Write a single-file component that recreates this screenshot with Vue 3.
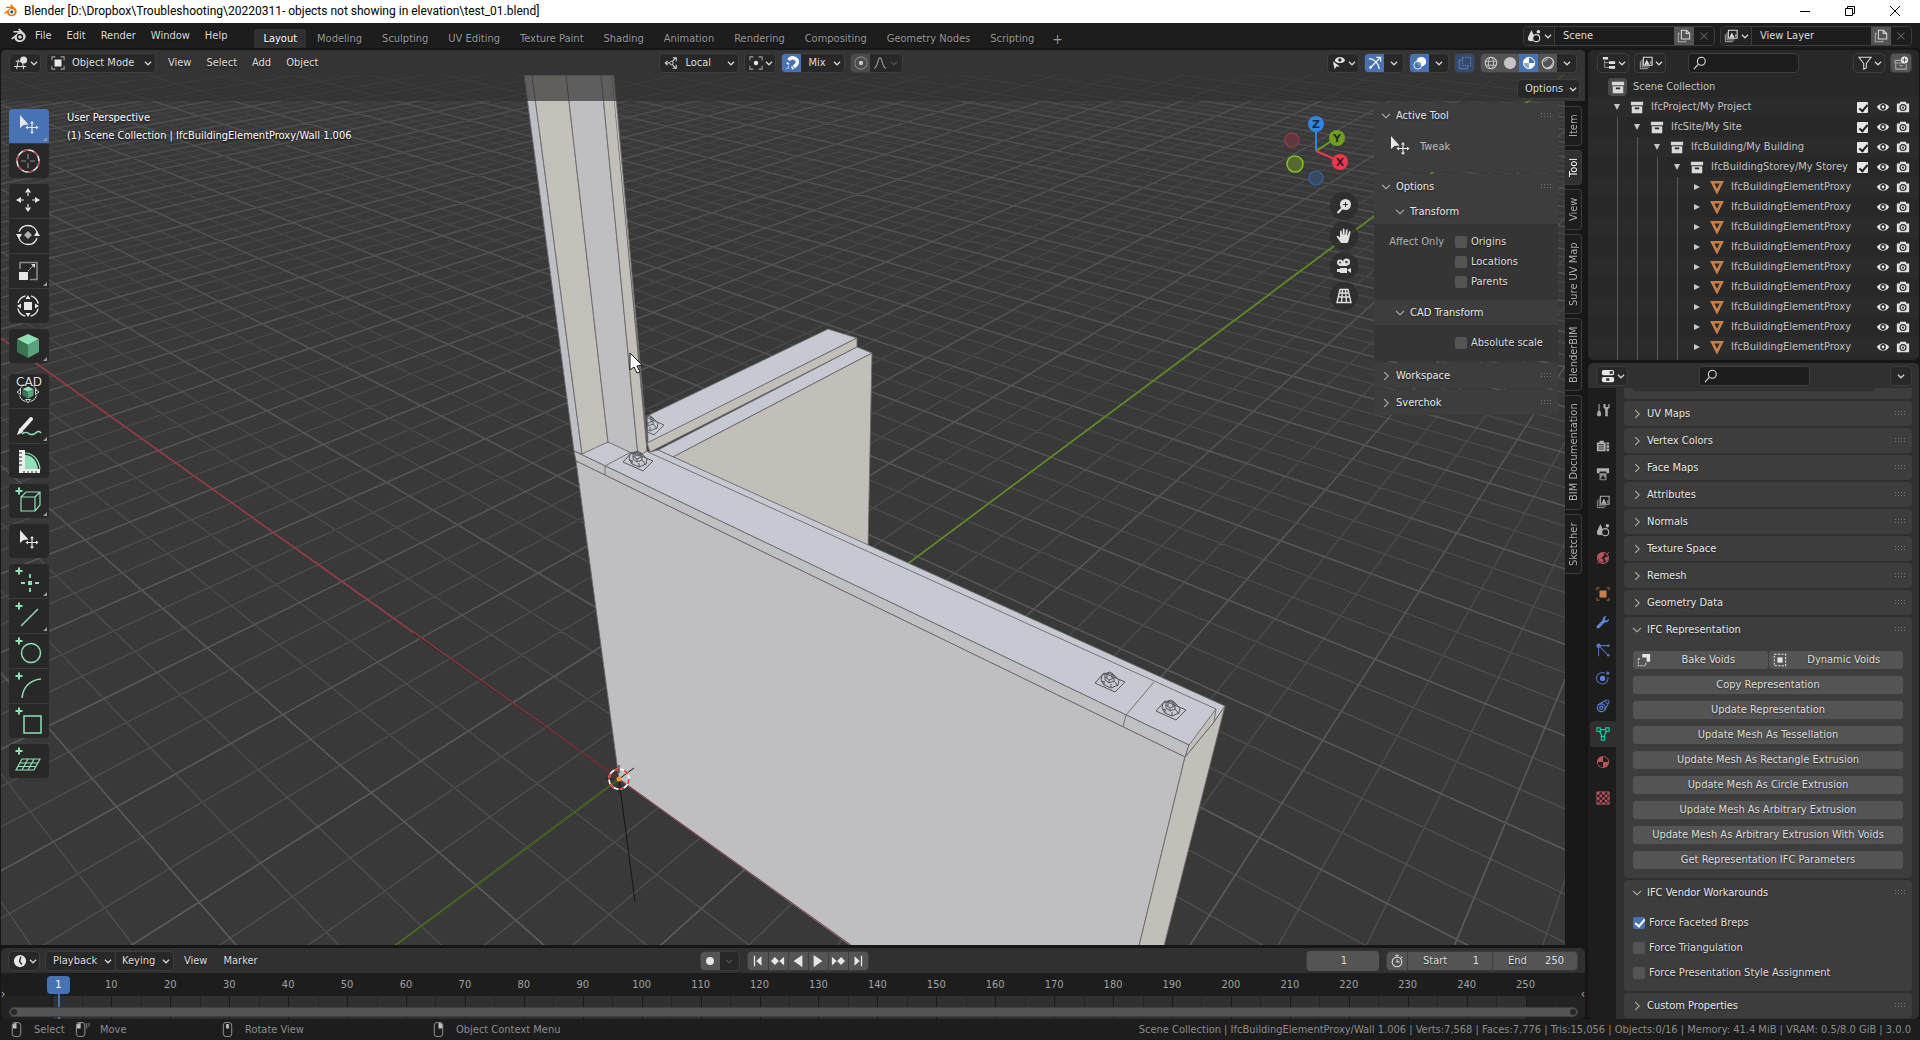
<script setup>
const O = [618, 729]
const VX = [-753, -249]
const VY = [1930, -249]
const A = -0.0281
const B = 0.0327

const project = (x, y) => {
  const w = 1 + A * x + B * y
  return [
    (O[0] + A * x * VX[0] + B * y * VY[0]) / w,
    (O[1] + A * x * VX[1] + B * y * VY[1]) / w,
  ]
}
const segment = (p, q) => 'M' + p.map((n) => n.toFixed(1)).join(' ') + 'L' + q.map((n) => n.toFixed(1)).join(' ')
const NEAR = 0.3
const lineX = (x) => {
  const y0 = Math.max(-30, (NEAR - 1 - A * x) / B)
  return segment(project(x, y0), project(x, 130))
}
const lineY = (y) => {
  const x1 = Math.min(34, (NEAR - 1 - B * y) / A)
  return segment(project(-130, y), project(x1, y))
}
const minor = []
const major = []
for (let i = -100; i <= 30; i++) if (i) (i % 3 ? minor : major).push(lineX(i))
for (let i = -21; i <= 110; i++) if (i) (i % 3 ? minor : major).push(lineY(i))
const minorPath = minor.join('')
const majorPath = major.join('')
const axisX = lineY(0)
const axisY = lineX(0)

const bolts = [[637, 411], [1109, 632], [1170, 660]]
const boltPath = 'M-15 1L-6-9 15 0 5 10zM-9-2l3 5 7 3 7-3 1-5-5-5-7-2-5 2zM-5-8v6l4 3 5-2v-6l-4-3zM-5-5l4 3 5-2M-1-2v3M-9-1l4 1M8 4L4-1M-6 3V0M1 6V2M-3-9v5M2-9v5'

const tweak = '<path d="M11 6v13l3.5-3 5-.5z" fill="#e6e6e6"/><path d="M23 13.5v10M18 18.5h10" stroke="#e6e6e6" stroke-width="1.2" fill="none"/><path d="M23 12l2 2.5h-4zM23 25l2-2.5h-4zM16.5 18.5l2.5-2v4zM29.5 18.5l-2.5-2v4z" fill="#e6e6e6"/>'
const plus = '<path d="M10 3.5v7M6.5 7h7" stroke="#8fe0b4" stroke-width="2" fill="none"/>'
const corner = '<path d="M38 28v4h-4z" fill="#9a9a9a"/>'
const cube = (x, y, s) => `<g transform="translate(${x} ${y}) scale(${s})"><path d="M0-11L11-6 0 0-11-6z" fill="#8fe0b4"/><path d="M-11-6L0 0v13L-11 7z" fill="#3b7355"/><path d="M11-6L0 0v13L11 7z" fill="#58a37c"/></g>`

const tools = [
  [
    ['Tweak', tweak + corner],
    ['Cursor', '<circle cx="19" cy="17" r="11" fill="none" stroke="#e6e6e6" stroke-width="1.5"/><circle cx="19" cy="17" r="11" fill="none" stroke="#b04048" stroke-width="1.5" stroke-dasharray="5.76"/><path d="M12 17h5M21 17h5M19 10v5M19 19v5" stroke="#8a8a8a" stroke-width="1.2"/>'],
  ],
  [
    ['Move', '<path d="M19 4l3 4.5h-6zM19 28l3-4.5h-6zM7 16l5-3v6zM31 16l-5-3v6z" fill="#e6e6e6"/><path d="M19 9v3M19 20v3M12 16h3M23 16h3" stroke="#e6e6e6" stroke-width="1.2"/>'],
    ['Rotate', '<circle cx="19" cy="16" r="9.5" fill="none" stroke="#e6e6e6" stroke-width="1.3" stroke-dasharray="24 5.8" stroke-dashoffset="-3"/><path d="M19 12l4 4-4 4-4-4z" fill="#b0b0b0"/><path d="M7 15h6l-3 5zM25 17h6l-3-5z" fill="#e6e6e6"/>'],
    ['Scale', '<path d="M11 15V8.5h17v17h-7" fill="none" stroke="#8d8d8d" stroke-width="1.5"/><path d="M10 18h9v8h-9z" fill="#e6e6e6"/><path d="M19 17l5-5" stroke="#e6e6e6" stroke-dasharray="2 1"/><path d="M26 10v4l-4-4z" fill="#e6e6e6"/>' + corner],
    ['Transform', '<circle cx="19" cy="17" r="10.5" fill="none" stroke="#e6e6e6" stroke-width="1.3" stroke-dasharray="11 5.49" stroke-dashoffset="-2.7"/><path d="M15 13h8v8h-8zM19 6l2.5 4h-5zM19 28l2.5-4h-5zM8 17l4-2.5v5zM30 17l-4-2.5v5z" fill="#e6e6e6"/>'],
  ],
  [['Add Cube', cube(19, 16, 1) + corner]],
  [
    ['CAD', '<circle cx="19" cy="19" r="9" fill="none" stroke="#d0d0d0" stroke-dasharray="9 5.14" stroke-dashoffset="-2.5"/>' + cube(19, 18, 0.5) + '<path d="M19 29l-2.5-3.5h5zM8 18l3.5-2.5v5zM30 18l-3.5-2.5v5z" fill="none" stroke="#d0d0d0"/>'],
    ['Annotate', '<path d="M13 20L22 10" stroke="#ededed" stroke-width="4" stroke-linecap="round"/><path d="M8 26l2.5-7 4 4z" fill="#ededed"/><path d="M13 25c6-5 7 3 12 0 3-2 5-4 7-1" fill="none" stroke="#8fe0b4" stroke-width="1.5"/>' + corner],
    ['Measure', '<path d="M16 25V11c7 0 12 6 13 14z" fill="#8fe0b4"/><path d="M16 9c9 0 14 8 15 16" fill="none" stroke="#8fe0b4" stroke-width="1.2"/><path d="M10 6h6v19h15v4H10z" fill="#ededed"/><path d="M10 9h3M10 13h3M10 17h3M10 21h3M15 29v-2M19 29v-2M23 29v-2M27 29v-2" stroke="#333"/>'],
  ],
  [['Add Box', plus + '<path d="M12 13h14v14H12zM12 13l5-5h14v13l-5 6M26 13l5-5" fill="none" stroke="#8fe0b4" stroke-width="1.2"/>' + corner]],
  [['Select', tweak]],
  [
    ['Point', plus + '<path d="M19 17h4v4h-4z" fill="#8fe0b4"/><path d="M12 19h4M26 19h4M21 10v4M21 24v4" stroke="#8fe0b4" stroke-width="1.8"/>' + corner],
    ['Line', plus + '<path d="M12 27L29 10" stroke="#8fe0b4" stroke-width="1.5"/>' + corner],
    ['Circle', plus + '<circle cx="22" cy="19" r="9.5" fill="none" stroke="#8fe0b4" stroke-width="1.5"/>'],
    ['Arc', plus + '<path d="M13 29C14 18 21 11 32 10" fill="none" stroke="#8fe0b4" stroke-width="1.5"/>'],
    ['Rectangle', plus + '<path d="M15 12h17v17H15z" fill="none" stroke="#8fe0b4" stroke-width="1.5"/>'],
  ],
  [['Workplane', plus + '<path d="M13 15h18l-6 11H7zM11 19h18M9 22.5h18M19 15l-6 11M25 15l-6 11" fill="none" stroke="#8fe0b4" stroke-width="1.2"/>']],
]

const w = 'fill="none" stroke="#d9d9d9" stroke-width="1.2"'
const layerIcon = '<path d="M5 1.5h10v9H5z" fill="none" stroke="currentColor" stroke-width="1.2"/><path d="M6 10l3-6 3 6z" fill="currentColor"/><path d="M13 9V6h1v3z" fill="currentColor"/><path d="M3.5 4v8.5H12M1.5 6v8.5H10" fill="none" stroke="currentColor" stroke-width="1" opacity=".8"/>'
const sceneIcon = '<path d="M5 1l4 9c0 3-2 4-4.5 4S1 13 1 10z" fill="currentColor"/><circle cx="10.5" cy="10.5" r="4" fill="#1d1d1d" stroke="currentColor" stroke-width="1.3"/><circle cx="13" cy="3" r="2" fill="currentColor"/>'
const ic = {
  down: '<path d="M4.5 6.5L8 10l3.5-3.5" fill="none" stroke="currentColor" stroke-width="1.5"/>',
  open: '<path d="M3.5 5.5L8 10l4.5-4.5" fill="none" stroke="#b8b8b8" stroke-width="1.2"/>',
  closed: '<path d="M6 3.5L10.5 8 6 12.5" fill="none" stroke="#b8b8b8" stroke-width="1.2"/>',
  view3d: `<path d="M2 6h7M0 12h14M5 4L3 15M10 8l1 7" ${w}/><circle cx="11" cy="4.5" r="4" fill="#e0e0e0"/>`,
  object: `<path d="M1 5V1h4M11 1h4v4M15 11v4h-4M5 15H1v-4" fill="none" stroke="#a0a0a0" stroke-width="1.2"/><path d="M4 4h8v8H4z" fill="#e6e6e6"/>`,
  local: `<path d="M2 8h6L13 2.5M8 8l5 5.5M10 2h4v4M14 10v4h-4M4 5.5L1.5 8 4 10.5" ${w}/><circle cx="8.5" cy="8" r="2" fill="#282828" stroke="#d9d9d9"/>`,
  pivot: '<path d="M1 5V1h4M11 1h4v4M15 11v4h-4M5 15H1v-4" fill="none" stroke="#a0a0a0" stroke-width="1.2"/><circle cx="8" cy="8" r="2.5" fill="#e6e6e6"/>',
  magnet: '<path d="M4 4.5C8-.5 15 3 14 8c-.5 2-2 3-4 4.5" fill="none" stroke="#fff" stroke-width="3.8"/><path d="M2 7.5l2.5 2M7.5 12l2 3" stroke="#fff" stroke-width="2"/><path d="M1 14h3v-3" fill="none" stroke="#c5d2ea"/>',
  prop: '<circle cx="8" cy="8" r="7" fill="none" stroke="#858585" stroke-width="1.2"/><circle cx="8" cy="8" r="2.5" fill="#c9c9c9"/>',
  curve: '<path d="M1 14C6 13 5 2 8 2s2 11 7 12" fill="none" stroke="#9a9a9a" stroke-width="1.3"/>',
  vis: '<path d="M3 5c3-5 9-5 12 0-3 4-9 4-12 0z" fill="#e6e6e6"/><circle cx="9" cy="4.5" r="2" fill="#282828"/><path d="M1 6l2 9 2-3 4 0z" fill="#e6e6e6"/>',
  gizmo: '<path d="M1 3c6 0 11 5 12 12M2 14L14 2M9.5 1.5h5v5" fill="none" stroke="#fff" stroke-width="1.3"/><circle cx="3" cy="13" r="1.5" fill="#fff"/>',
  overlay: '<circle cx="9.5" cy="6.5" r="5.5" fill="#fff"/><circle cx="5.5" cy="10.5" r="4.5" fill="#4772b3" fill-opacity=".75" stroke="#fff"/>',
  xray: '<path d="M5 1.5h9.5V11H5z" fill="none" stroke="#6687bd" stroke-dasharray="2 1"/><path d="M5 4.5H1.5v10H11V11" fill="none" stroke="#6687bd"/>',
  wire: '<circle cx="8" cy="8" r="6.5" fill="none" stroke="#d0d0d0" stroke-width="1.2"/><ellipse cx="8" cy="8" rx="3" ry="6.5" fill="none" stroke="#d0d0d0"/><path d="M2 6h12M2 10.5h12" stroke="#d0d0d0"/>',
  solid: '<circle cx="8" cy="8" r="7" fill="#c4c4c4"/>',
  material: '<circle cx="8" cy="8" r="6.5" fill="#fff" stroke="#fff"/><path d="M8 2v6h6a6 6 0 0 0-6-6z" fill="#4772b3"/><path d="M8 8v6a6 6 0 0 1-6-6z" fill="#4772b3" opacity=".6"/>',
  rendered: '<circle cx="8" cy="8" r="6.5" fill="none" stroke="#c9c9c9" stroke-width="1.4"/><path d="M4 7a4 4 0 0 1 4-3.5" fill="none" stroke="#c9c9c9"/><path d="M13 6c0 4-3 7-7 7 4 3 9-2 7-7z" fill="#c9c9c9"/>',
  outliner: '<path d="M1 1h6v3H1zM8 6h7v3H8zM8 11.5h7v3H8z" fill="#e0e0e0"/><path d="M3 5v8h5M3 7.5h5" fill="none" stroke="#a8a8a8"/>',
  layer: layerIcon,
  scene: sceneIcon,
  search: `<circle cx="9.5" cy="6" r="4.5" fill="none" stroke="#e0e0e0" stroke-width="1.2"/><path d="M6 9.5L1 15" stroke="#e0e0e0" stroke-width="1.2"/>`,
  filter: `<path d="M1 1.5h14L9.5 8.5v5L6.5 15V8.5z" ${w}/>`,
  newcol: '<path d="M1 5h9M2 7v8h12V9M1 5v3h10M6 11h4" fill="none" stroke="#a9a9a9" stroke-width="1.2"/><circle cx="12" cy="4.5" r="4" fill="#eee"/><path d="M12 2v5M9.5 4.5h5" stroke="#444"/>',
  copy: `<path d="M5 1.5h6L14.5 5v6.5H5z" ${w}/><path d="M10.5 1.5V5h4" ${w}/><path d="M3 5H1.5v9.5H10V13" fill="none" stroke="#aaa" stroke-width="1.2"/>`,
  x: '<path d="M4 4l8 8M12 4l-8 8" stroke="#686868" stroke-width="1.2"/>',
  collection: '<path d="M1 2h14v4H1z" fill="#d9d9d9"/><path d="M2 7h12v8H2z" fill="#d9d9d9"/><path d="M5.5 8.5h5v2h-5z" fill="#282828"/>',
  mesh: '<path d="M2.5 2.5h11L8 13.5z" fill="none" stroke="#c87f48" stroke-width="3"/>',
  eye: '<path d="M1 8c3-5.5 11-5.5 14 0-3 5.5-11 5.5-14 0z" fill="#e6e6e6"/><circle cx="8" cy="8" r="3.3" fill="#282828"/><circle cx="8" cy="8" r="1.6" fill="#e6e6e6"/>',
  cam: '<path d="M1 4h3.5V2h7v2H15v10H1z" fill="#e0e0e0"/><circle cx="8" cy="8.7" r="4" fill="#282828"/><circle cx="8" cy="8.7" r="2.7" fill="#e0e0e0"/><circle cx="8" cy="8.7" r="1.3" fill="#282828"/>',
  props: '<rect x="1" y="1" width="14" height="6" rx="2" fill="#e6e6e6"/><rect x="1" y="9" width="14" height="6" rx="2" fill="#e6e6e6"/><path d="M10 2.5h3.5v3H10zM6 10.5h3.5v3H6z" fill="#282828"/>',
  clock: '<circle cx="8" cy="8" r="7" fill="#e6e6e6"/><path d="M9 3L7.5 8.5 10 12" fill="none" stroke="#282828" stroke-width="1.6"/>',
  watch: `<circle cx="8" cy="9" r="5.5" ${w}/><path d="M6 1.5h4M8 2v2M12.5 3l1.5 1.5M8 6v3h3" ${w}/>`,
  rec: '<circle cx="8" cy="8" r="4.5" fill="#e6e6e6"/>',
  jumpStart: '<path d="M4 2v12" stroke="#e6e6e6" stroke-width="1.5"/><path d="M12 2.5v11L6 8z" fill="#e6e6e6"/>',
  prevKey: '<path d="M4.5 3.500L9 8l-4.500 4.500L0 8zM15 3v10L9.500 8z" fill="#e6e6e6"/>',
  playBack: '<path d="M13 1v14L3 8z" fill="#e6e6e6"/>',
  play: '<path d="M3 1v14l10-7z" fill="#e6e6e6"/>',
  nextKey: '<path d="M11.500 3.500L16 8l-4.500 4.500L7 8zM1 3v10l5.500-5z" fill="#e6e6e6"/>',
  jumpEnd: '<path d="M12 2v12" stroke="#e6e6e6" stroke-width="1.5"/><path d="M4 2.5v11L10 8z" fill="#e6e6e6"/>',
  bake: '<path d="M6 1h9v9h-4V5H6z" fill="#e6e6e6"/><path d="M1.5 6.5V14.5H10V11M1.5 6.5H5" fill="none" stroke="#e6e6e6" stroke-width="1.2" stroke-dasharray="2 1.5"/>',
  dynamic: '<path d="M1.5 1.5h13v13h-13z" fill="none" stroke="#e6e6e6" stroke-width="1.2" stroke-dasharray="2.5 1.5"/><path d="M5 5h6v6H5z" fill="#e6e6e6"/>',
  tool: '<path d="M3.5 1v8" stroke="#a8a8a8" stroke-width="1.2"/><path d="M2 9h3l1 4c0 1.5-1 2-2.5 2S1 14.5 1 13z" fill="#a8a8a8"/><path d="M8.5 1v4l2 2v8h3V7l2-2V1h-1.5v3.5h-3V1z" fill="#a8a8a8"/>',
  render: '<path d="M1 4h3V2h5v2h2v10H1z" fill="#b0b0b0"/><path d="M3 6.5h6M3 9h6M3 11.5h6" stroke="#1d1d1d"/><path d="M12 4h3v10h-3z" fill="#b0b0b0"/><path d="M12 6.5h3M12 10.5h3" stroke="#1d1d1d"/>',
  output: '<path d="M1 1.5h14V7h-3V5H4v2H1z" fill="#b0b0b0"/><path d="M4 7h8v8H4z" fill="#909090"/><path d="M5 14l3-5 3 5z" fill="#1d1d1d"/>',
  world: '<circle cx="8" cy="8" r="6.3" fill="none" stroke="#b8525c" stroke-width="1.3"/><path d="M2 5l4-3 3 1-1 3-3 2 3 2v3L4 11zM10 8l4-1-2 5zM1 15l2-2M13 3l2-2" fill="#b8525c" stroke="#b8525c"/>',
  obj: '<path d="M1 4V1h3M12 1h3v3M15 12v3h-3M4 15H1v-3" fill="none" stroke="#8a5a36" stroke-width="1.2"/><path d="M4 4h8v8H4z" fill="#c87f48"/>',
  mod: '<path d="M2.5 13.5L9 7" stroke="#5b83d6" stroke-width="3.6" stroke-linecap="round"/><path d="M12 1C8 1 6.5 5 8.5 7.5 11 10 15 8 15 4l-3 2.5L9.8 5z" fill="#5b83d6"/>',
  part: '<circle cx="3" cy="3" r="2.5" fill="#5b83d6"/><path d="M3 3h11M3 3l11 11M3 3v12" stroke="#5672ad" stroke-width="1.2"/><circle cx="14" cy="3" r="1.5" fill="#5672ad"/><circle cx="14" cy="14" r="1.5" fill="#5672ad"/>',
  phys: '<circle cx="7.5" cy="8.5" r="3" fill="#5b83d6"/><path d="M10 2.5A6.5 6.5 0 1 0 13.5 7" fill="none" stroke="#5672ad" stroke-width="1.2"/><circle cx="13.5" cy="2.5" r="1.8" fill="#5672ad"/>',
  constr: '<circle cx="6" cy="10" r="4.5" fill="none" stroke="#5b83d6" stroke-width="1.3"/><circle cx="6" cy="10" r="1.8" fill="none" stroke="#5b83d6" stroke-width="1.3"/><path d="M2 7L11 1.5M10 13l4.5-9" stroke="#5b83d6" stroke-width="1.2"/><circle cx="13" cy="3" r="2" fill="none" stroke="#5b83d6"/>',
  data: '<path d="M3 3h10L8 13z" fill="none" stroke="#00d6a3" stroke-width="1.3"/><path d="M1 1h4v4H1zM11 1h4v4h-4zM6 11h4v4H6z" fill="#303030" stroke="#00d6a3" stroke-width="1.2"/>',
  mat: '<circle cx="8" cy="8" r="7" fill="#b8525c"/><path d="M8 8v6a6 6 0 0 1-6-6zM8 2a6 6 0 0 1 6 6H8z" fill="#1d1d1d"/>',
  tex: '<path d="M1 1h14v14H1z" fill="#1d1d1d" stroke="#b8525c"/><path d="M1 1h3v3H1zM7 1h3v3H7zM4 4h3v3H4zM10 4h3v3h-3zM1 7h3v3H1zM7 7h3v3H7zM4 10h3v3H4zM10 10h3v3h-3zM13 1h2v3h-2zM13 7h2v3h-2zM1 13h3v2H1zM7 13h3v2H7zM13 13h2v2h-2z" fill="#b8525c"/>',
  blender: '<path d="M1 10.5L8.5 4.5H3.5V3h6L8 1.5 9.5.5 15 6c2 4-1 8-5 8-3.5 0-5.5-2-5.5-4.5L2.5 11.5z" fill="currentColor"/><circle cx="10" cy="9" r="3.2" fill="var(--hole)"/><circle cx="10" cy="9" r="1.8" fill="var(--dot)"/>',
  mouseL: '<path d="M3.5 3.5a3 3 0 0 1 3-3h3a3 3 0 0 1 3 3v9a3 3 0 0 1-3 3h-3a3 3 0 0 1-3-3z" fill="none" stroke="#9a9a9a"/><path d="M4 7V3l3-2h1v6z" fill="#c0c0c0"/>',
  mouseD: '<path d="M1.5 3.5a3 3 0 0 1 3-3h3a3 3 0 0 1 3 3v9a3 3 0 0 1-3 3h-3a3 3 0 0 1-3-3z" fill="none" stroke="#9a9a9a"/><path d="M2 7V3l3-2h1v6z" fill="#c0c0c0"/><path d="M12.5 1v6M15 1v4" stroke="#888"/>',
  mouseM: '<rect x="3.5" y=".5" width="9" height="15" rx="3" fill="none" stroke="#9a9a9a"/><rect x="6.5" y="2" width="3" height="5" rx="1" fill="#c0c0c0"/>',
  mouseR: '<rect x="3.5" y=".5" width="9" height="15" rx="3" fill="none" stroke="#9a9a9a"/><path d="M8 1h2l2 2v4H8z" fill="#c0c0c0"/>',
  zoom: '<circle cx="9.5" cy="6.5" r="5.5" fill="#e0e0e0"/><path d="M6 10.5L1.5 15" stroke="#e0e0e0" stroke-width="2.2"/><path d="M9.5 4v5M7 6.5h5" stroke="#333"/>',
  hand: '<path d="M5 15c-1-2-3-4-4.5-6.5 1-1 2.5 0 3.5 1V3.5c0-1.2 1.6-1.2 1.7 0L6 7h.5l.3-5.5c.1-1.2 1.6-1.2 1.7 0L8.7 7h.5l.8-5c.3-1.1 1.7-.9 1.6.3L11.2 7.5h.5l1.3-4c.4-1 1.7-.6 1.5.5L13 11c-.5 2-1 3-1.5 4z" fill="#e0e0e0"/>',
  movie: '<circle cx="4" cy="4.5" r="3" fill="#e0e0e0"/><circle cx="10.5" cy="4" r="3.5" fill="#e0e0e0"/><path d="M3 5h8v3H3zM4 10h7v5H4zM11 12l4-2v5zM1 11h3v3H1z" fill="#e0e0e0"/><circle cx="4" cy="4.5" r="1" fill="#333"/><circle cx="10.5" cy="4" r="1.2" fill="#333"/>',
  persp: '<path d="M4 1.5h8l3 13H1zM3.5 5h9.500M2.5 9h11.500M6.5 1.5l-1 13M9.5 1.5l1 13" fill="none" stroke="#e0e0e0" stroke-width="1.4"/>',
}

const workspaces = ['Layout', 'Modeling', 'Sculpting', 'UV Editing', 'Texture Paint', 'Shading', 'Animation', 'Rendering', 'Compositing', 'Geometry Nodes', 'Scripting']
const sideTabs = [['Item', 40], ['Tool', 35], ['View', 41], ['Sure UV Map', 80], ['BlenderBIM', 73], ['BIM Documentation', 115], ['Sketcher', 60]]
const tree = [
  ['IfcProject/My Project', 0], ['IfcSite/My Site', 1], ['IfcBuilding/My Building', 2], ['IfcBuildingStorey/My Storey', 3],
  ...Array.from({ length: 10 }, () => ['IfcBuildingElementProxy', 4]),
]
const propTabs = [
  ['tool'], ['render', 1], ['output'], ['layer'], ['scene'], ['world'], ['obj', 1], ['mod'], ['part'], ['phys'], ['constr'], ['data'], ['mat'], ['tex', 1],
]
const panels = ['UV Maps', 'Vertex Colors', 'Face Maps', 'Attributes', 'Normals', 'Texture Space', 'Remesh', 'Geometry Data']
const actions = ['Copy Representation', 'Update Representation', 'Update Mesh As Tessellation', 'Update Mesh As Rectangle Extrusion', 'Update Mesh As Circle Extrusion', 'Update Mesh As Arbitrary Extrusion', 'Update Mesh As Arbitrary Extrusion With Voids', 'Get Representation IFC Parameters']
const frames = Array.from({ length: 26 }, (_, i) => i * 10)
</script>

<template>
  <div class="app">
    <header class="title">
      <svg class="ic brand" viewBox="0 0 16 16" v-html="ic.blender" />
      <span>Blender [D:\Dropbox\Troubleshooting\20220311- objects not showing in elevation\test_01.blend]</span>
      <div class="win">
        <button aria-label="Minimize"><svg viewBox="0 0 10 10"><path d="M0 5.5h10" /></svg></button>
        <button aria-label="Restore"><svg viewBox="0 0 10 10"><path d="M.5 2.5h7v7h-7zM2.5 2.5v-2h7v7h-2" /></svg></button>
        <button aria-label="Close"><svg viewBox="0 0 10 10"><path d="M0 0l10 10M10 0L0 10" /></svg></button>
      </div>
    </header>

    <nav class="menubar">
      <svg class="ic logo" viewBox="0 0 16 16" v-html="ic.blender" />
      <button v-for="m in ['File', 'Edit', 'Render', 'Window', 'Help']" :key="m" class="menu">{{ m }}</button>
      <div class="workspaces">
        <button v-for="(t, i) in workspaces" :key="t" :class="{ on: i === 0 }">{{ t }}</button>
        <button class="add">+</button>
      </div>
      <div class="data-block" v-for="d in [['scene', 'Scene'], ['layer', 'View Layer']]" :key="d[1]">
        <button class="pick" :aria-label="d[1] + ' list'"><svg class="ic" viewBox="0 0 16 16" v-html="ic[d[0]]" /><svg class="ic ch" viewBox="0 0 16 16" v-html="ic.down" /></button>
        <input :value="d[1]" :aria-label="d[1] + ' name'" />
        <button class="dup" aria-label="Duplicate"><svg class="ic" viewBox="0 0 16 16" v-html="ic.copy" /></button>
        <button class="del" aria-label="Remove"><svg class="ic" viewBox="0 0 16 16" v-html="ic.x" /></button>
      </div>
    </nav>

    <main class="work">
      <div class="left">
        <section class="viewport">
          <svg class="scene" viewBox="0 0 1584 895" preserveAspectRatio="xMidYMid slice">
            <defs>
              <linearGradient id="gMinor" gradientUnits="userSpaceOnUse" x1="0" y1="0" x2="0" y2="895">
                <stop offset="0" stop-color="#4a4a4a" stop-opacity="0.45" />
                <stop offset="0.4" stop-color="#4b4b4b" stop-opacity="0.9" />
                <stop offset="1" stop-color="#4f4f4f" />
              </linearGradient>
              <linearGradient id="gMajor" gradientUnits="userSpaceOnUse" x1="0" y1="0" x2="0" y2="895">
                <stop offset="0" stop-color="#525252" stop-opacity="0.7" />
                <stop offset="0.3" stop-color="#525252" />
                <stop offset="1" stop-color="#5c5c5c" />
              </linearGradient>
            </defs>
            <rect width="1584" height="895" fill="#393939" />
            <path :d="minorPath" stroke="url(#gMinor)" stroke-width="1.3" fill="none" />
            <path :d="majorPath" stroke="url(#gMajor)" stroke-width="1.6" fill="none" />
            <path :d="axisX" stroke="#9c3a45" stroke-width="1.6" />
            <path :d="axisY" stroke="#5f8a24" stroke-width="1.8" />
            <path d="M396 895L618 729 412 583" fill="none" stroke="#111" stroke-width="1" opacity=".6" />

            <g stroke="#6a6a6e" stroke-width=".9" stroke-linejoin="round">
              <path d="M646 366L827 279 856 288 647 393z" fill="#c6c9d1" />
              <path :d="boltPath" transform="translate(648 375)" fill="none" stroke="#55555a" />
              <path d="M856 288V297L649 402 646 393z" fill="#c2bfb8" />
              <path d="M856 297L871 303 672 407 657 400z" fill="#c6c9d1" />
              <path d="M672 407L871 303 867 500z" fill="#c2bfb8" />
              <path d="M573 401L607 392 649 402 657 400 1224 656 1213 672 1188 695z" fill="#c6c9d1" />
              <path d="M573 401L1188 695 1184 707 575 411z" fill="#c0c0c3" />
              <path d="M575 411L1184 707 1138 896H850L618 729z" fill="#bfbfc2" />
              <path d="M1184 707L1213 672 1224 656 1163 896H1138z" fill="#c2bfb8" />
              <path d="M1188 695L1215 659 1213 672 1184 707z" fill="#c2bfb8" />
              <path d="M647 402L1215 659M604 416L630 402M604 416V425M1125 665L1153 632M1125 665L1122 677" fill="none" />
              <path d="M523 25H531L581 404 573 401z" fill="#bebfc4" />
              <path d="M531 25H565L607 392 581 404z" fill="#c3c0b9" />
              <path d="M565 25H600L637 406 607 392z" fill="#bfbfc2" />
              <path d="M600 25H611L645 390 646 401 637 406z" fill="#c2bfb8" />
              <path d="M611 25H613L646 390" fill="#c2bfb8" />
            </g>
            <path d="M850 895L618 729" stroke="#83434a" fill="none" />
            <path v-for="b in bolts" :key="b[0]" :d="boltPath" :transform="`translate(${b[0]} ${b[1]})`" fill="none" stroke="#55555a" />
            <path d="M618 729L634 852M618 729L633 718" stroke="#151515" fill="none" />
            <circle cx="618" cy="729" r="10" fill="none" stroke="#fff" stroke-width="1.6" />
            <circle cx="618" cy="729" r="10" fill="none" stroke="#e2322f" stroke-width="1.6" stroke-dasharray="5.24" />
            <path d="M618 715v8M618 735v8M604 729h8" stroke="#222" />
            <circle cx="618" cy="729" r="2.5" fill="#f29a2e" />
            <path d="M629 303v17l4-3 3 6 3-1-3-6 5-1z" fill="#fff" stroke="#111" />
          </svg>

          <div class="vhead">
            <button class="drop" aria-label="Editor type"><svg class="ic" viewBox="0 0 16 16" v-html="ic.view3d" /><svg class="ic ch" viewBox="0 0 16 16" v-html="ic.down" /></button>
            <label class="drop mode"><svg class="ic" viewBox="0 0 16 16" v-html="ic.object" /><select aria-label="Mode"><option>Object Mode</option></select><svg class="ic ch" viewBox="0 0 16 16" v-html="ic.down" /></label>
            <div class="menus">
              <button v-for="m in ['View', 'Select', 'Add', 'Object']" :key="m">{{ m }}</button>
            </div>
            <div class="mid">
              <label class="drop local"><svg class="ic" viewBox="0 0 16 16" v-html="ic.local" /><select aria-label="Orientation"><option>Local</option></select><svg class="ic ch" viewBox="0 0 16 16" v-html="ic.down" /></label>
              <button class="drop" aria-label="Pivot"><svg class="ic" viewBox="0 0 16 16" v-html="ic.pivot" /><svg class="ic ch" viewBox="0 0 16 16" v-html="ic.down" /></button>
              <div class="group">
                <button class="cell blue" aria-label="Snap"><svg class="ic" viewBox="0 0 16 16" v-html="ic.magnet" /></button>
                <label class="snap"><select aria-label="Snap to"><option>Mix</option></select><svg class="ic ch" viewBox="0 0 16 16" v-html="ic.down" /></label>
              </div>
              <div class="group dim">
                <button class="cell grey" aria-label="Proportional editing"><svg class="ic" viewBox="0 0 16 16" v-html="ic.prop" /></button>
                <button class="falloff" aria-label="Falloff"><svg class="ic" viewBox="0 0 16 16" v-html="ic.curve" /><svg class="ic ch faint" viewBox="0 0 16 16" v-html="ic.down" /></button>
              </div>
            </div>
            <div class="right-tools">
              <button class="drop" aria-label="Visibility"><svg class="ic" viewBox="0 0 16 16" v-html="ic.vis" /><svg class="ic ch" viewBox="0 0 16 16" v-html="ic.down" /></button>
              <div class="group" v-for="g in ['gizmo', 'overlay']" :key="g">
                <button class="cell blue" :aria-label="g"><svg class="ic" viewBox="0 0 16 16" v-html="ic[g]" /></button>
                <button class="cell" :aria-label="g + ' options'"><svg class="ic ch" viewBox="0 0 16 16" v-html="ic.down" /></button>
              </div>
              <div class="group"><button class="cell xray" aria-label="X-Ray"><svg class="ic" viewBox="0 0 16 16" v-html="ic.xray" /></button></div>
              <div class="group">
                <button v-for="s in ['wire', 'solid', 'material', 'rendered']" :key="s" class="cell" :class="s === 'material' ? 'blue' : 'grey'" :aria-label="s"><svg class="ic" viewBox="0 0 16 16" v-html="ic[s]" /></button>
                <button class="cell" aria-label="Shading options"><svg class="ic ch" viewBox="0 0 16 16" v-html="ic.down" /></button>
              </div>
            </div>
          </div>
          <div class="vsub"><button class="drop opt">Options<svg class="ic ch" viewBox="0 0 16 16" v-html="ic.down" /></button></div>

          <div class="vbody">
            <div class="toolbar">
              <div v-for="(g, gi) in tools" :key="gi" class="tgroup" :class="{ gap: gi === 3 }">
                <button v-for="(t, ti) in g" :key="t[0]" :class="{ sel: gi === 0 && ti === 0, cad: t[0] === 'CAD' }" :aria-label="t[0]">
                  <span v-if="t[0] === 'CAD'">CAD</span>
                  <svg viewBox="0 0 40 34" v-html="t[1]" />
                </button>
              </div>
            </div>
            <div class="info">
              <div>User Perspective</div>
              <div>(1) Scene Collection | IfcBuildingElementProxy/Wall 1.006</div>
            </div>
            <div class="nav">
              <svg class="axes" viewBox="0 0 76 76">
                <path d="M37 39V14" stroke="#2f84e4" stroke-width="2" /><path d="M37 39L57 26" stroke="#6f9e20" stroke-width="2" /><path d="M37 39L60 49" stroke="#ec3751" stroke-width="2" />
                <circle cx="13" cy="28" r="7" fill="#5e373c" stroke="#9f3c4a" stroke-width="1.2" />
                <circle cx="16" cy="52" r="8" fill="#54692b" stroke="#86c421" stroke-width="1.5" />
                <circle cx="37" cy="66" r="7" fill="#374a60" stroke="#2f66a8" stroke-width="1.2" />
                <circle cx="37" cy="12" r="8" fill="#2f84e4" /><circle cx="58" cy="26" r="8" fill="#6f9e20" /><circle cx="61" cy="50" r="8" fill="#ec3751" />
                <text x="37" y="16">Z</text><text x="58" y="30">Y</text><text x="61" y="54">X</text>
              </svg>
              <button v-for="n in ['zoom', 'hand', 'movie', 'persp']" :key="n" :aria-label="n"><svg class="ic" viewBox="0 0 16 16" v-html="ic[n]" /></button>
            </div>
            <aside class="npanel">
              <section class="active">
                <h3><svg class="ic" viewBox="0 0 16 16" v-html="ic.open" />Active Tool<i class="grip" /></h3>
                <div class="tweak"><svg viewBox="0 0 40 34" v-html="tweak" />Tweak</div>
              </section>
              <section>
                <h3><svg class="ic" viewBox="0 0 16 16" v-html="ic.open" />Options<i class="grip" /></h3>
                <h4><svg class="ic" viewBox="0 0 16 16" v-html="ic.open" />Transform</h4>
                <div class="opts">
                  <span class="lead">Affect Only</span>
                  <div>
                    <label v-for="o in ['Origins', 'Locations', 'Parents']" :key="o"><input type="checkbox" />{{ o }}</label>
                  </div>
                </div>
                <h4><svg class="ic" viewBox="0 0 16 16" v-html="ic.open" />CAD Transform</h4>
                <div class="opts single">
                  <span class="lead"></span>
                  <div><label><input type="checkbox" />Absolute scale</label></div>
                </div>
              </section>
              <section v-for="s in ['Workspace', 'Sverchok']" :key="s"><h3><svg class="ic" viewBox="0 0 16 16" v-html="ic.closed" />{{ s }}<i class="grip" /></h3></section>
            </aside>
            <div class="sidetabs">
              <button v-for="s in sideTabs" :key="s[0]" :class="{ on: s[0] === 'Tool' }" :style="{ height: s[1] + 'px' }">{{ s[0] }}</button>
            </div>
          </div>
        </section>

        <section class="timeline">
          <div class="thead">
            <button class="drop" aria-label="Editor type"><svg class="ic" viewBox="0 0 16 16" v-html="ic.clock" /><svg class="ic ch" viewBox="0 0 16 16" v-html="ic.down" /></button>
            <div class="group pk">
              <button v-for="m in ['Playback', 'Keying']" :key="m">{{ m }}<svg class="ic ch" viewBox="0 0 16 16" v-html="ic.down" /></button>
            </div>
            <div class="menus"><button>View</button><button>Marker</button></div>
            <div class="transport">
              <div class="group"><button class="cell grey" aria-label="Auto keying"><svg class="ic" viewBox="0 0 16 16" v-html="ic.rec" /></button><button class="cell" aria-label="Keying options"><svg class="ic ch faint" viewBox="0 0 16 16" v-html="ic.down" /></button></div>
              <div class="group"><button v-for="p in ['jumpStart', 'prevKey', 'playBack', 'play', 'nextKey', 'jumpEnd']" :key="p" class="cell grey wide" :aria-label="p"><svg class="ic" viewBox="0 0 16 16" v-html="ic[p]" /></button></div>
            </div>
            <div class="frames">
              <input class="num cur" value="1" aria-label="Current frame" />
              <div class="group range">
                <button class="cell grey wide" aria-label="Preview range"><svg class="ic" viewBox="0 0 16 16" v-html="ic.watch" /></button>
                <label class="num">Start<input value="1" /></label>
                <label class="num">End<input value="250" /></label>
              </div>
            </div>
          </div>
          <div class="ruler">
            <div v-for="f in frames" :key="f" class="tick"><span v-if="f">{{ f }}</span><span v-else class="head">1</span></div>
          </div>
          <div class="scroll"></div>
          <span class="edge l">›</span><span class="edge r">‹</span>
        </section>
      </div>

      <div class="rightcol">
        <section class="outliner">
          <div class="ohead">
            <button class="drop" aria-label="Editor type"><svg class="ic" viewBox="0 0 16 16" v-html="ic.outliner" /><svg class="ic ch" viewBox="0 0 16 16" v-html="ic.down" /></button>
            <button class="drop" aria-label="Display mode"><svg class="ic" viewBox="0 0 16 16" v-html="ic.layer" /><svg class="ic ch" viewBox="0 0 16 16" v-html="ic.down" /></button>
            <label class="search"><svg class="ic" viewBox="0 0 16 16" v-html="ic.search" /><input aria-label="Search" /></label>
            <button class="drop push" aria-label="Filter"><svg class="ic" viewBox="0 0 16 16" v-html="ic.filter" /><svg class="ic ch" viewBox="0 0 16 16" v-html="ic.down" /></button>
            <div class="group"><button class="cell grey wide" aria-label="New collection"><svg class="ic" viewBox="0 0 16 16" v-html="ic.newcol" /></button></div>
          </div>
          <div class="row root"><span class="badge"><svg class="ic" viewBox="0 0 16 16" v-html="ic.collection" /></span><span class="nm">Scene Collection</span></div>
          <div v-for="(r, i) in tree" :key="i" class="row" :class="{ alt: i % 2 === 0 }">
            <i v-for="n in r[1]" :key="n" class="guide" />
            <span class="arrow" :class="{ shut: r[1] === 4 }"></span>
            <svg class="ic" viewBox="0 0 16 16" v-html="r[1] === 4 ? ic.mesh : ic.collection" />
            <span class="nm">{{ r[0] }}</span>
            <input v-if="r[1] < 4" type="checkbox" checked aria-label="Include" />
            <svg class="ic" viewBox="0 0 16 16" v-html="ic.eye" />
            <svg class="ic" viewBox="0 0 16 16" v-html="ic.cam" />
          </div>
        </section>

        <section class="props">
          <div class="phead">
            <button class="drop" aria-label="Editor type"><svg class="ic" viewBox="0 0 16 16" v-html="ic.props" /><svg class="ic ch" viewBox="0 0 16 16" v-html="ic.down" /></button>
            <label class="search"><svg class="ic" viewBox="0 0 16 16" v-html="ic.search" /><input aria-label="Search" /></label>
            <div class="group push"><button class="cell wide" aria-label="Options"><svg class="ic ch" viewBox="0 0 16 16" v-html="ic.down" /></button></div>
          </div>
          <div class="pbody">
            <div class="ptabs">
              <button v-for="t in propTabs" :key="t[0]" :class="{ on: t[0] === 'data', sep: t[1] }" :aria-label="t[0]"><svg class="ic" viewBox="0 0 16 16" v-html="ic[t[0]]" /></button>
            </div>
            <div class="panels">
              <section class="cut"><i></i></section>
              <section v-for="p in panels" :key="p"><h3><svg class="ic" viewBox="0 0 16 16" v-html="ic.closed" />{{ p }}<i class="grip" /></h3></section>
              <section class="ifc">
                <h3><svg class="ic" viewBox="0 0 16 16" v-html="ic.open" />IFC Representation<i class="grip" /></h3>
                <div class="acts">
                  <div class="pair">
                    <button class="act"><svg class="ic" viewBox="0 0 16 16" v-html="ic.bake" /><span>Bake Voids</span></button>
                    <button class="act"><svg class="ic" viewBox="0 0 16 16" v-html="ic.dynamic" /><span>Dynamic Voids</span></button>
                  </div>
                  <button v-for="a in actions" :key="a" class="act">{{ a }}</button>
                </div>
              </section>
              <section class="vendor">
                <h3><svg class="ic" viewBox="0 0 16 16" v-html="ic.open" />IFC Vendor Workarounds<i class="grip" /></h3>
                <div class="checks">
                  <label><input type="checkbox" checked />Force Faceted Breps</label>
                  <label><input type="checkbox" />Force Triangulation</label>
                  <label><input type="checkbox" />Force Presentation Style Assignment</label>
                </div>
              </section>
              <section><h3><svg class="ic" viewBox="0 0 16 16" v-html="ic.closed" />Custom Properties<i class="grip" /></h3></section>
            </div>
          </div>
        </section>
      </div>
    </main>

    <footer class="status">
      <span class="hint h1"><svg class="ic" viewBox="0 0 16 16" v-html="ic.mouseL" />Select</span>
      <span class="hint h2"><svg class="ic" viewBox="0 0 16 16" v-html="ic.mouseD" />Move</span>
      <span class="hint h3"><svg class="ic" viewBox="0 0 16 16" v-html="ic.mouseM" />Rotate View</span>
      <span class="hint"><svg class="ic" viewBox="0 0 16 16" v-html="ic.mouseR" />Object Context Menu</span>
      <span class="stats">Scene Collection | IfcBuildingElementProxy/Wall 1.006 | Verts:7,568 | Faces:7,776 | Tris:15,056 | Objects:0/16 | Memory: 41.4 MiB | VRAM: 0.5/8.0 GiB | 3.0.0</span>
    </footer>
  </div>
</template>

<style>
body { background: #161616; }
</style>

<style scoped>
* { box-sizing: border-box; }
.app { height: 100vh; display: flex; flex-direction: column; overflow: hidden; background: #161616; color: #dcdcdc; font: 11px/16px "DejaVu Sans Condensed", "DejaVu Sans", sans-serif; }
button, input, select { font: inherit; color: inherit; background: none; border: 0; padding: 0; margin: 0; outline: 0; appearance: none; }
h3, h4 { margin: 0; font: inherit; color: #e6e6e6; }
button, h3, h4, label { text-shadow: 0 1px 2px rgba(0, 0, 0, 0.5); white-space: nowrap; }
.ic { width: 14px; height: 14px; flex: none; display: block; }
.ch { color: #d0d0d0; }
.faint { color: #4c4c4c; }

.title { height: 23px; flex: none; background: #fff; color: #000; display: flex; align-items: center; padding: 0 20px 2px 3px; font: 12px/16px Roboto, "Noto Sans", sans-serif; }
.brand { color: #ea7600; --hole: #fff; --dot: #265787; margin-right: 7px; }
.win { margin-left: auto; display: flex; gap: 35px; }
.win svg { width: 10px; height: 10px; display: block; fill: none; stroke: #000; }

.menubar { height: 27px; flex: none; background: #1d1d1d; border-bottom: 2px solid #161616; display: flex; align-items: center; padding: 0 8px 0 10px; }
.logo { width: 16px; height: 16px; color: #d9d9d9; --hole: #1d1d1d; --dot: #d9d9d9; margin-right: 9px; }
.menu { margin-right: 15px; }
.workspaces { display: flex; align-self: flex-end; margin-left: 12px; margin-right: auto; }
.workspaces button { height: 19px; padding: 0 9px; color: #989898; border-radius: 3px 3px 0 0; margin-right: 2px; }
.workspaces .on { background: #303030; color: #fff; }
.workspaces .add { font-size: 14px; padding: 0 7px; }
.data-block { display: flex; height: 20px; border: 1px solid #3d3d3d; border-radius: 4px; overflow: hidden; margin-left: 5px; }
.data-block input { width: 120px; padding-left: 8px; background: #1d1d1d; border-left: 1px solid #3d3d3d; }
.pick { width: 30px; background: #232323; display: flex; align-items: center; justify-content: center; }
.pick .ch { margin-right: -3px; }
.dup, .del { width: 20px; display: grid; place-items: center; }
.dup { background: #545454; }

.work { flex: 1; min-height: 0; display: grid; grid-template-columns: minmax(0, 1fr) 331px; gap: 3px; padding: 0 1px; }
.left, .rightcol { display: flex; flex-direction: column; gap: 3px; min-height: 0; min-width: 0; }
.viewport { flex: 1; min-height: 0; position: relative; overflow: hidden; border-radius: 5px 5px 0 0; display: flex; flex-direction: column; }
.scene { position: absolute; inset: 0; width: 100%; height: 100%; }
.vhead, .vsub, .vbody { position: relative; }
.vhead { height: 25px; background: #343434; display: flex; align-items: center; padding: 0 8px; gap: 5px; }
.vsub { height: 26px; background: rgba(48, 48, 48, 0.68); display: flex; justify-content: flex-end; align-items: flex-end; padding: 0 5px 2px 0; }
.drop, .group { height: 20px; background: #282828; border: 1px solid #3d3d3d; border-radius: 4px; display: flex; align-items: center; overflow: hidden; flex: none; }
.drop { padding: 0 0 0 4px; width: 32px; }
.drop .ch { margin-left: -1px; }
.mode { width: 110px; }
.drop select, .snap select { flex: 1; min-width: 0; padding-left: 7px; }
.menus { display: flex; gap: 15px; padding-left: 7px; }
.mid { display: flex; gap: 5px; margin-left: 336px; }
.local { width: 80px; }
.cell { width: 19px; height: 18px; display: grid; place-items: center; }
.wide { width: 20px; }
.blue { background: #4772b3; }
.grey { background: #545454; }
.xray { background: #334a6d; }
.snap { width: 43px; display: flex; align-items: center; }
.dim .grey { background: #4a4a4a; }
.falloff { width: 32px; display: flex; align-items: center; padding-left: 3px; }
.right-tools { display: flex; gap: 5px; margin-left: auto; }
.opt { width: 63px; padding-left: 7px; }
.opt .ch { margin-left: 3px; }

.vbody { flex: 1; min-height: 0; display: flex; }
.toolbar { position: absolute; left: 8px; top: 8px; }
.tgroup { display: flex; flex-direction: column; gap: 1px; margin-bottom: 6px; border-radius: 4px; overflow: hidden; background: #3a3a3a; }
.tgroup.gap { margin-top: 11px; }
.tgroup button { width: 40px; height: 34px; background: #282828; position: relative; display: block; }
.tgroup .sel { background: #4772b3; }
.tgroup svg { width: 40px; height: 34px; display: block; }
.cad span { position: absolute; left: 0; right: 0; top: 1px; font: 12px/14px "DejaVu Sans", sans-serif; }
.info { padding: 8px 0 0 66px; line-height: 18px; color: #fff; text-shadow: 0 1px 2px #000; }
.nav { margin-left: auto; display: flex; flex-direction: column; align-items: flex-end; gap: 2px; padding: 11px 16px 0 0; }
.axes { width: 76px; height: 76px; margin-right: 3px; margin-bottom: 2px; }
.axes text { font: bold 11px "DejaVu Sans", sans-serif; text-anchor: middle; fill: #111c; }
.nav button { width: 28px; height: 28px; border-radius: 50%; background: #2c2c2ccc; display: grid; place-items: center; }
.nav .ic { width: 16px; height: 16px; }
.npanel { width: 184px; margin: 2px 7px 0 0; display: flex; flex-direction: column; gap: 2px; }
.npanel section { background: #3d3d3d; border-radius: 4px; }
.npanel .active { height: 69px; }
h3 { height: 25px; display: flex; align-items: center; gap: 3px; padding: 0 6px 0 5px; }
h4 { height: 25px; display: flex; align-items: center; gap: 3px; padding-left: 19px; }
.panels h3 { padding-left: 6px; }
.grip { width: 11px; height: 5px; margin-left: auto; background-image: linear-gradient(90deg, #777 1px, transparent 1px); background-size: 3px 5px; -webkit-mask: linear-gradient(#000 1px, transparent 1px 3px, #000 3px 4px, transparent 4px); }
.tweak { display: flex; align-items: center; color: #b8b8b8; padding: 2px 0 0 6px; }
.tweak svg { width: 40px; height: 34px; }
.opts { background: #353535; display: flex; height: 76px; padding: 8px 0; }
.opts.single { height: 36px; border-radius: 0 0 4px 4px; }
.lead { width: 80px; margin-right: 1px; padding-right: 10px; text-align: right; line-height: 20px; color: #b0b0b0; }
label input[type=checkbox] { width: 12px; height: 12px; border-radius: 2px; background: #545454; flex: none; }
.opts label, .checks label { display: flex; align-items: center; height: 20px; gap: 4px; }
.sidetabs { width: 20px; background: #181818; display: flex; flex-direction: column; gap: 4px; padding-top: 5px; }
.sidetabs button { width: 17px; flex: none; writing-mode: vertical-rl; transform: rotate(180deg); border: 1px solid #3a3a3a; border-right: 0; border-radius: 4px 0 0 4px; color: #b0b0b0; background: #1d1d1d; line-height: 15px; text-align: center; }
.sidetabs .on { background: #303030; color: #fff; }

.timeline { height: 71px; flex: none; background: #1d1d1d; border-radius: 5px; overflow: hidden; position: relative; }
.thead { height: 25px; background: #303030; display: flex; align-items: center; padding: 0 7px; }
.pk { margin-left: 5px; }
.pk button { display: flex; align-items: center; justify-content: space-between; width: 69px; padding-left: 7px; height: 18px; }
.pk button + button { width: 58px; border-left: 1px solid #3d3d3d; padding-left: 6px; }
.thead .menus { padding-left: 10px; gap: 16px; }
.transport { display: flex; gap: 7px; margin-left: 442px; }
.transport .wide + .wide { border-left: 1px solid #3d3d3d; }
.frames { display: flex; gap: 7px; margin-left: auto; }
.num { background: #545454; height: 18px; display: flex; align-items: center; padding: 0 13px 0 15px; border-left: 1px solid #3d3d3d; }
.num.cur { width: 73px; height: 20px; border-radius: 4px; text-align: center; }
.num input { flex: 1; min-width: 0; text-align: right; }
.range .num { width: 85px; }
.ruler { height: 46px; display: flex; padding: 0 30px 0 22px; background: linear-gradient(#1d1d1d 23px, transparent 23px), linear-gradient(90deg, #232323 52px, #303030 52px, #303030 calc(100% - 58px), #232323 calc(100% - 58px)); }
.tick { flex: 1 1 0; min-width: 0; text-align: center; color: #a0a0a0; padding-top: 4px; position: relative; }
.tick::before, .tick::after { content: ""; position: absolute; top: 23px; bottom: 0; left: 50%; width: 1px; background: #1a1a1a; }
.tick::after { left: 100%; background: #262626; }
.head { position: relative; left: 10%; display: block; width: 23px; height: 18px; line-height: 18px; margin: -1px auto 0; border-radius: 4px; background: #4772b3; color: #fff; }
.head::after { content: ""; position: absolute; left: 11px; top: 18px; width: 2px; height: 26px; background: #4772b3; }
.scroll { position: absolute; left: 8px; right: 7px; bottom: 2px; height: 10px; border-radius: 5px; background: #545454; border: 1px solid #404040; }
.scroll::before, .scroll::after { content: ""; position: absolute; top: 1px; width: 6px; height: 6px; border-radius: 3px; background: #282828; left: 1px; }
.scroll::after { left: auto; right: 1px; }
.edge { position: absolute; top: 38px; color: #aaa; font-size: 12px; }
.edge.l { left: 0; }
.edge.r { right: 0; }

.outliner { height: 310px; flex: none; background: #282828; border-radius: 5px; overflow: hidden; }
.ohead, .phead { display: flex; align-items: center; gap: 5px; }
.ohead { height: 25px; padding: 0 7px 0 9px; margin-bottom: 2px; }
.search { display: flex; align-items: center; width: 111px; height: 20px; padding-left: 4px; border: 1px solid #3d3d3d; border-radius: 4px; background: #1d1d1d; }
.search input { width: 80px; }
.ohead .search { margin-left: 17px; }
.push { margin-left: auto; }
.row { height: 20px; display: flex; align-items: center; padding: 0 9px 0 21px; gap: 6px; color: #c0c0c0; }
.row.alt { background: #2b2b2b; }
.row.root { gap: 5px; padding-left: 20px; }
.badge { width: 19px; height: 18px; border-radius: 4px; background: #4a4a4a; display: grid; place-items: center; }
.nm { flex: 1; min-width: 0; overflow: hidden; white-space: nowrap; }
.row .nm { margin-left: 1px; }
.guide { width: 1px; height: 20px; margin: 0 5px 0 8px; background: #5a5a5a; flex: none; }
.row input { width: 11px; height: 11px; margin-right: 2px; border-radius: 1px; background: #e6e6e6; position: relative; }
.row input::after { content: ""; position: absolute; left: 4px; top: 1px; width: 3px; height: 7px; border: solid #222; border-width: 0 2px 2px 0; transform: rotate(40deg); }
.arrow { width: 16px; height: 16px; flex: none; display: grid; place-items: center; margin-right: -1px; }
.arrow::before { content: ""; border: 3px solid transparent; border-top: 6px solid #c8c8c8; border-bottom: 0; }
.arrow.shut::before { border: 3px solid transparent; border-left: 6px solid #c8c8c8; border-right: 0; }

.props { flex: 1; min-height: 0; background: #303030; border-radius: 5px; overflow: hidden; display: flex; flex-direction: column; }
.phead { height: 25px; flex: none; padding: 0 7px 0 8px; }
.phead .search { margin-left: 66px; }
.pbody { flex: 1; min-height: 0; display: flex; }
.ptabs { width: 28px; background: #1d1d1d; padding: 9px 0 0 2px; }
.ptabs button { width: 26px; height: 26px; margin-bottom: 2px; display: grid; place-items: center; border-radius: 4px 0 0 4px; color: #b0b0b0; }
.ptabs .on { background: #303030; }
.ptabs .sep { margin-top: 10px; }
.panels { flex: 1; min-width: 0; padding: 0 7px 0 8px; display: flex; flex-direction: column; gap: 2px; }
.panels section { background: #3d3d3d; border-radius: 4px; flex: none; }
.panels .cut { height: 11px; border-radius: 0 0 4px 4px; padding: 0 37px 0 9px; }
.cut i { display: block; height: 3px; border-bottom: 1px solid #2c2c2c; border-radius: 0 0 3px 3px; background: #333; }
.panels .ifc { height: 261px; }
.acts { display: flex; flex-direction: column; gap: 7px; padding: 9px 9px 0; }
.pair { display: flex; gap: 1px; }
.act { height: 18px; line-height: 18px; background: #545454; border-radius: 3px; text-align: center; }
.pair .act { flex: 1; display: flex; align-items: center; padding: 0 4px; }
.pair span { flex: 1; padding-left: 2px; }
.panels .vendor { height: 111px; }
.checks { padding: 8px 9px 0; display: flex; flex-direction: column; gap: 5px; }
.panels input:checked { background: #4772b3; position: relative; }
.panels input:checked::after { content: ""; position: absolute; left: 4px; top: 0; width: 4px; height: 8px; border: solid #fff; border-width: 0 2px 2px 0; transform: rotate(40deg); }

.status { height: 21px; flex: none; background: #1d1d1d; display: flex; align-items: center; padding: 0 9px; color: #8c8c8c; white-space: nowrap; }
.hint { display: flex; align-items: center; gap: 10px; }
.hint .ic { width: 15px; height: 15px; }
.h1 { width: 66px; }
.h2 { width: 145px; }
.h3 { width: 211px; }
.stats { margin-left: auto; }
</style>
